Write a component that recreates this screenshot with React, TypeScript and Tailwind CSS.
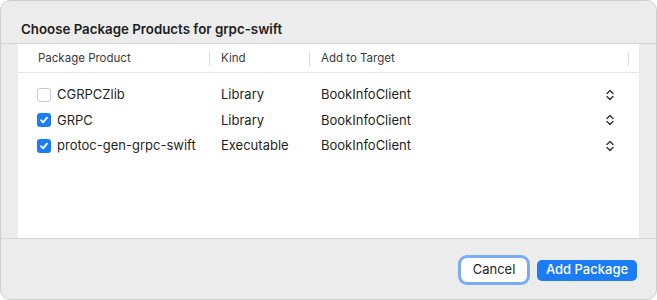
const rows = [
  { name: 'CGRPCZlib', kind: 'Library', target: 'BookInfoClient', checked: false },
  { name: 'GRPC', kind: 'Library', target: 'BookInfoClient', checked: true },
  { name: 'protoc-gen-grpc-swift', kind: 'Executable', target: 'BookInfoClient', checked: true },
]

const Checkbox = ({ checked }: { checked: boolean }) =>
  checked ? (
    <span className="flex h-[14px] w-[14px] items-center justify-center rounded-[3px] bg-[#1b7cf4]">
      <svg width="10" height="10" viewBox="0 0 10 10">
        <path d="M2 5.2 L4.1 7.4 L8 2.6" fill="none" stroke="white" strokeWidth="1.8" strokeLinecap="round" strokeLinejoin="round" />
      </svg>
    </span>
  ) : (
    <span className="h-[14px] w-[14px] rounded-[3px] border border-[#c9c9c9] bg-white" />
  )

const Stepper = () => (
  <svg width="8" height="12" viewBox="0 0 8 12">
    <path d="M1 4.5 L4 1.5 L7 4.5 M1 7.5 L4 10.5 L7 7.5" fill="none" stroke="#333" strokeWidth="1.4" strokeLinecap="round" strokeLinejoin="round" />
  </svg>
)

const App = () => {
  return (
    <div className="h-[300px] w-[657px] bg-white" style={{ fontFamily: 'Inter, "Liberation Sans", sans-serif' }}>
      <div className="flex h-full w-full flex-col overflow-hidden rounded-[10px] border border-[#cfcfcf] bg-[#ececec]">
        <div className="flex h-[43px] shrink-0 items-center border-b border-[#d6d6d6] pl-[20px]">
          <h1 className="mt-[15px] text-[13.3px] font-semibold text-[#1d1d1d]">Choose Package Products for grpc-swift</h1>
        </div>
        <div className="flex flex-1 px-[17px]">
          <div className="flex-1 bg-white">
            <div className="flex h-[29px] items-center border-b border-[#e4e4e4] pt-[1px] text-[11.5px] text-[#3a3a3a]">
              <div className="flex w-[192px] items-center justify-between pl-[20px]">
                <span>Package Product</span>
                <span className="h-[14px] w-px bg-[#dcdcdc]" />
              </div>
              <div className="flex w-[100px] items-center justify-between pl-[11px]">
                <span>Kind</span>
                <span className="h-[14px] w-px bg-[#dcdcdc]" />
              </div>
              <div className="flex w-[319px] items-center justify-between pl-[11px]">
                <span>Add to Target</span>
                <span className="h-[14px] w-px bg-[#dcdcdc]" />
              </div>
            </div>
            <div className="pt-[9px]">
              {rows.map((r) => (
                <div key={r.name} className="flex h-[25.5px] items-center text-[13px] text-[#1f1f1f]">
                  <div className="flex w-[192px] items-center gap-[6px] pl-[19px]">
                    <Checkbox checked={r.checked} />
                    <span>{r.name}</span>
                  </div>
                  <div className="w-[100px] pl-[11px]">{r.kind}</div>
                  <div className="flex w-[319px] items-center justify-between pl-[11px] pr-[15px]">
                    <span>{r.target}</span>
                    <Stepper />
                  </div>
                </div>
              ))}
            </div>
          </div>
        </div>
        <div className="flex h-[61px] shrink-0 items-center justify-end gap-[10px] border-t border-[#d6d6d6] pr-[19px] pt-[2px]">
          <button className="flex h-[24px] w-[66px] items-center justify-center rounded-[6px] bg-white text-[13px] text-[#1f1f1f] ring-[3px] ring-[#7aacf4]">
            Cancel
          </button>
          <button className="flex h-[21px] w-[100px] items-center justify-center rounded-[5px] bg-[#1b7cf4] text-[13px] font-medium text-white">
            Add Package
          </button>
        </div>
      </div>
    </div>
  )
}

export default App
